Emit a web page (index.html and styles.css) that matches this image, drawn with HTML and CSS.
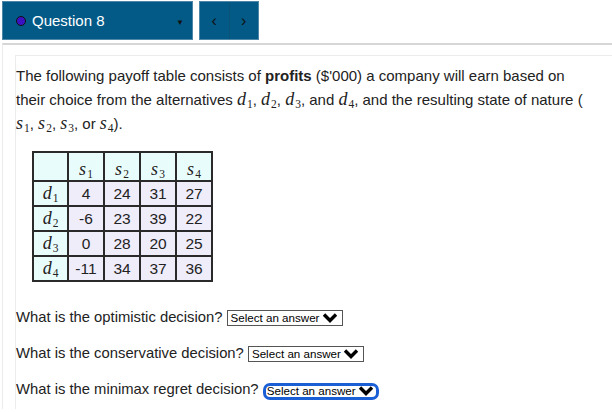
FILE: index.html
```html
<!DOCTYPE html>
<html>
<head>
<meta charset="utf-8">
<link rel="stylesheet" href="styles.css">
</head>
<body>
<div class="topbar">
  <div class="qselect">
    <span class="dot"></span>
    <span class="qlabel">Question 8</span>
    <span class="caret">▼</span>
  </div>
  <div class="nav">
    <span class="navbtn">‹</span>
    <span class="navbtn">›</span>
  </div>
</div>
<div class="panel">
  <div class="inner">
    <p class="intro">The following payoff table consists of <b>profits</b> ($'000) a company will earn based on<br>their choice from the alternatives <span class="m">d<sub>1</sub></span>, <span class="m">d<sub>2</sub></span>, <span class="m">d<sub>3</sub></span>, and <span class="m">d<sub>4</sub></span>, and the resulting state of nature (<br><span class="m">s<sub>1</sub></span>, <span class="m">s<sub>2</sub></span>, <span class="m">s<sub>3</sub></span>, or <span class="m">s<sub>4</sub></span>).</p>
    <table class="payoff">
      <tr class="hrow"><th></th><th><span class="m">s<sub>1</sub></span></th><th><span class="m">s<sub>2</sub></span></th><th><span class="m">s<sub>3</sub></span></th><th><span class="m">s<sub>4</sub></span></th></tr>
      <tr><th><span class="m">d<sub>1</sub></span></th><td>4</td><td>24</td><td>31</td><td>27</td></tr>
      <tr><th><span class="m">d<sub>2</sub></span></th><td>-6</td><td>23</td><td>39</td><td>22</td></tr>
      <tr><th><span class="m">d<sub>3</sub></span></th><td>0</td><td>28</td><td>20</td><td>25</td></tr>
      <tr><th><span class="m">d<sub>4</sub></span></th><td>-11</td><td>34</td><td>37</td><td>36</td></tr>
    </table>
    <div class="qs">
      <div class="q">What is the optimistic decision? <span class="sel"><span class="seltxt">Select an answer</span><svg class="chev" viewBox="0 0 18 12" width="18" height="12"><path d="M3 2.5 L9 8.5 L15 2.5" fill="none" stroke="#000" stroke-width="3.4"/></svg></span></div>
      <div class="q">What is the conservative decision? <span class="sel"><span class="seltxt">Select an answer</span><svg class="chev" viewBox="0 0 18 12" width="18" height="12"><path d="M3 2.5 L9 8.5 L15 2.5" fill="none" stroke="#000" stroke-width="3.4"/></svg></span></div>
      <div class="q">What is the minimax regret decision? <span class="sel focus"><span class="seltxt">Select an answer</span><svg class="chev" viewBox="0 0 18 12" width="18" height="12"><path d="M3 2.5 L9 8.5 L15 2.5" fill="none" stroke="#000" stroke-width="3.4"/></svg></span></div>
    </div>
  </div>
</div>
</body>
</html>
```
FILE: styles.css
```css
html, body {
  margin: 0;
  padding: 0;
  background: #fff;
  font-family: "Liberation Sans", Arial, sans-serif;
  color: #222;
}
.topbar {
  display: flex;
  gap: 6px;
  padding: 1px 0 0 2px;
  height: 40px;
  box-sizing: border-box;
}
.qselect {
  width: 191px;
  height: 39px;
  box-sizing: border-box;
  background: #045a86;
  border: 1px solid #4d86a7;
  display: flex;
  align-items: center;
  padding-left: 13px;
  color: #fff;
}
.dot {
  width: 8px;
  height: 8px;
  border-radius: 50%;
  background: #3a12c4;
  border: 1px solid #111;
  margin-right: 6px;
}
.qlabel {
  font-size: 15px;
  flex: 1;
}
.caret {
  font-size: 8px;
  color: #111;
  margin-right: 8px;
  margin-top: 3px;
}
.nav {
  width: 60px;
  height: 39px;
  box-sizing: border-box;
  background: #045a86;
  border: 1px solid #4d86a7;
  display: flex;
}
.navbtn {
  flex: 1;
  display: flex;
  align-items: center;
  justify-content: center;
  color: #111;
  font-size: 16px;
}
.navbtn + .navbtn {
  border-left: 1px solid #0b5279;
}
.panel {
  margin: 3px 0 0 2px;
  border-top: 2px solid #d6d6d6;
  border-left: 1px solid #ececec;
  padding: 10px 0 0 12px;
  height: 366px;
  box-sizing: border-box;
}
.inner {
  border-left: 1px solid #ececec;
  border-top: 1px solid #ececec;
  height: 100%;
  box-sizing: border-box;
  padding-left: 0;
}
.intro {
  margin: 8px 0 0;
  font-size: 15px;
  line-height: 24px;
  color: #222;
  white-space: nowrap;
}
.m {
  font-family: "Liberation Serif", "DejaVu Serif", serif;
  font-style: italic;
  font-size: 18px;
  line-height: 0;
}
.m sub {
  font-style: normal;
  font-size: 11.5px;
  vertical-align: -3px;
  line-height: 0;
  margin-left: 1px;
}
.payoff {
  border-collapse: collapse;
  margin: 15px 0 0 16px;
  font-size: 15.5px;
}
.payoff th, .payoff td {
  border: 2px solid #2a2a2a;
  height: 23px;
  padding: 0;
  text-align: center;
  font-weight: normal;
}
.payoff td {
  background: #f0edfb;
  width: 34px;
}
.payoff th {
  background: #e9fcfc;
  width: 33px;
}
.payoff .hrow th {
  height: 26px;
  vertical-align: bottom;
  padding-bottom: 1px;
}
.qs {
  margin-top: 17px;
}
.q {
  font-size: 14.8px;
  height: 36px;
  line-height: 36px;
  color: #222;
  white-space: nowrap;
}
.sel {
  display: inline-flex;
  align-items: center;
  justify-content: space-between;
  width: 116px;
  height: 16px;
  box-sizing: border-box;
  border: 1px solid #555;
  font-size: 11.6px;
  line-height: 14px;
  padding: 0 3px 0 3px;
  color: #000;
  vertical-align: 0;
  white-space: nowrap;
}
.sel.focus {
  border: 3px solid #1a5fd6;
  border-radius: 7px;
  padding: 0 1px 0 1px;
  height: 17px;
  vertical-align: -1px;
}
.chev {
  display: block;
  flex: none;
}
```
